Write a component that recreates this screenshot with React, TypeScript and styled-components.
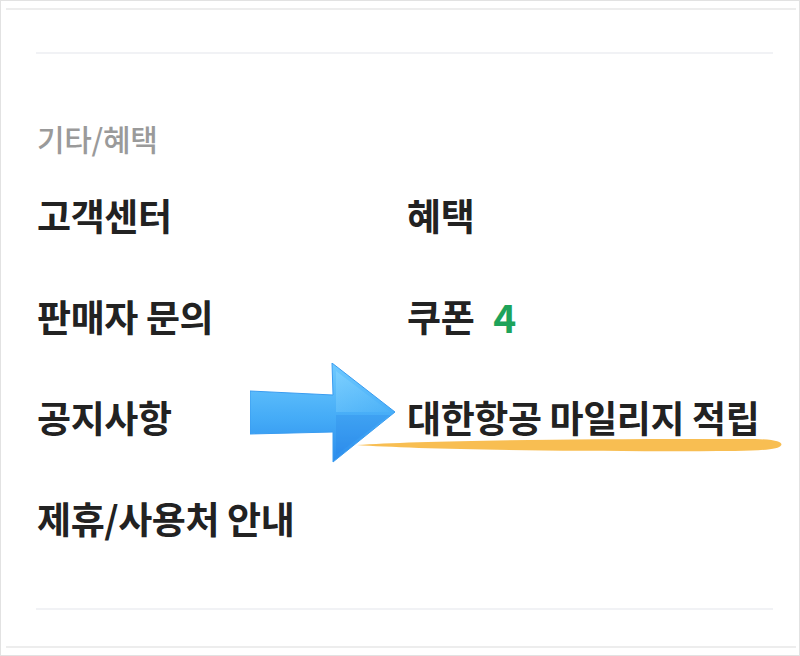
import React from 'react'
import styled, { createGlobalStyle } from 'styled-components'

const GlobalStyle = createGlobalStyle`
  html, body {
    margin: 0;
    padding: 0;
    background: #ffffff;
  }
  body {
    font-family: "Noto Sans CJK KR", "Noto Sans", sans-serif;
  }
`

const Frame = styled.div`
  box-sizing: border-box;
  width: 800px;
  height: 656px;
  border: 1px solid #e2e2e2;
  padding: 7px 3px 7px 5px;
`

const Panel = styled.div`
  border-top: 2px solid #ededed;
  border-bottom: 2px solid #ededed;
  padding: 42px 23px 36px 30px;
`

const Section = styled.section`
  border-top: 2px solid #f1f2f5;
  border-bottom: 2px solid #f1f2f5;
  padding: 64px 0 66px 1px;
`

const Heading = styled.h2`
  margin: 0;
  font-size: 30px;
  line-height: 40px;
  font-weight: 500;
  letter-spacing: -0.3px;
  color: #9a9a9a;
`

const Menu = styled.ul`
  list-style: none;
  margin: 33px 0 0;
  padding: 0;
  display: grid;
  grid-template-columns: 370px 1fr;
  grid-auto-rows: 48px;
  row-gap: 53px;
`

const Item = styled.li`
  position: relative;
  display: flex;
  align-items: center;
  font-size: 37px;
  line-height: 48px;
  font-weight: 700;
  letter-spacing: -0.4px;
  color: #222222;
  white-space: nowrap;
`

const Label = styled.span`
  position: relative;
  z-index: 2;
`

const Count = styled.span`
  margin-left: 19px;
  font-size: 39px;
  font-weight: 700;
  color: #1ea35a;
`

const Highlight = styled.svg`
  position: absolute;
  left: -52px;
  top: 44px;
  z-index: 1;
`

const Pointer = styled.svg`
  position: absolute;
  left: -157px;
  top: -30px;
  z-index: 3;
`

function Arrow() {
  return (
    <Pointer width="150" height="104" viewBox="0 0 150 104">
      <defs>
        <linearGradient id="arrowFill" x1="0" y1="0" x2="0" y2="1">
          <stop offset="0" stopColor="#6fcaff" />
          <stop offset="0.55" stopColor="#45acf7" />
          <stop offset="1" stopColor="#2b8cec" />
        </linearGradient>
        <linearGradient id="arrowFacet" x1="0" y1="0" x2="1" y2="1">
          <stop offset="0" stopColor="#8ad6ff" />
          <stop offset="1" stopColor="#4fb4f8" />
        </linearGradient>
      </defs>
      <polygon
        points="0,28 83,32 82,0 145,49 83,99 83,69 0,71"
        fill="url(#arrowFill)"
        stroke="#3a9cf0"
        strokeWidth="1"
        strokeLinejoin="round"
      />
      <polygon points="86,8 140,49 86,49" fill="url(#arrowFacet)" opacity="0.55" />
      <polygon points="86,52 140,52 86,92" fill="#2680e4" opacity="0.25" />
    </Pointer>
  )
}

function Stroke() {
  return (
    <Highlight width="430" height="16" viewBox="0 0 430 16">
      <path
        d="M2 8 C 60 4, 200 1.5, 400 2 C 424 2.5, 428 6, 426 8.5 C 424 12, 410 13.5, 380 14 C 200 15, 60 12, 2 8 Z"
        fill="#f7b73f"
        opacity="0.9"
      />
    </Highlight>
  )
}

export default function App() {
  return (
    <>
      <GlobalStyle />
      <Frame>
        <Panel>
          <Section>
            <Heading>기타/혜택</Heading>
            <Menu>
              <Item>고객센터</Item>
              <Item>혜택</Item>
              <Item>판매자 문의</Item>
              <Item>
                쿠폰<Count>4</Count>
              </Item>
              <Item>공지사항</Item>
              <Item>
                <Stroke />
                <Arrow />
                <Label>대한항공 마일리지 적립</Label>
              </Item>
              <Item>제휴/사용처 안내</Item>
            </Menu>
          </Section>
        </Panel>
      </Frame>
    </>
  )
}
